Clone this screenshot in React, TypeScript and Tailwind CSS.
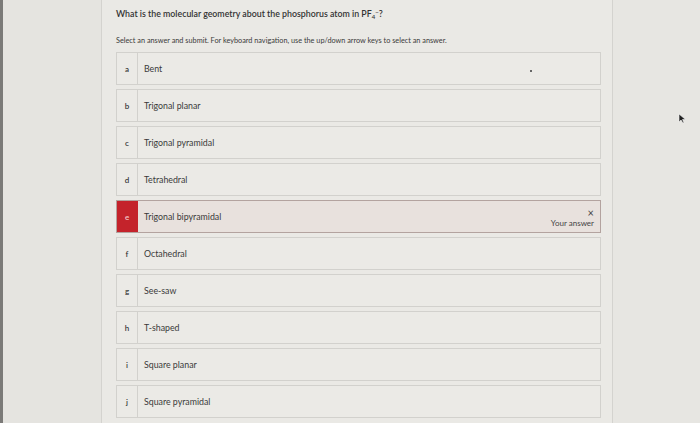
import React from 'react';

type Option = {
    key: string;
    label: string;
    wrong?: boolean;
};

const options: Option[] = [
    { key: 'a', label: 'Bent' },
    { key: 'b', label: 'Trigonal planar' },
    { key: 'c', label: 'Trigonal pyramidal' },
    { key: 'd', label: 'Tetrahedral' },
    { key: 'e', label: 'Trigonal bipyramidal', wrong: true },
    { key: 'f', label: 'Octahedral' },
    { key: 'g', label: 'See-saw' },
    { key: 'h', label: 'T-shaped' },
    { key: 'i', label: 'Square planar' },
    { key: 'j', label: 'Square pyramidal' },
];

function OptionRow({ option }: { option: Option }) {
    return (
        <div
            className={`flex h-[33px] items-stretch border ${
                option.wrong ? 'border-[#b3a39f] bg-[#e8e1dd]' : 'border-[#d2d1cd] bg-[#ebeae6]'
            }`}
        >
            <div
                className={`flex w-[21px] shrink-0 items-center justify-center border-r text-[8px] font-semibold ${
                    option.wrong ? 'border-[#c4232b] bg-[#c4232b] text-[#f3c9c9]' : 'border-[#d2d1cd] text-[#3a3a3a]'
                }`}
            >
                {option.key}
            </div>
            <div className="flex flex-1 items-center pl-[6px] text-[8.8px] text-[#3a3a3a]">{option.label}</div>
            {option.wrong && (
                <div className="flex flex-col items-end justify-center pr-[6px] leading-none text-[#444]">
                    <span className="text-[11px] leading-[11px]">×</span>
                    <span className="mt-[1px] text-[8px]">Your answer</span>
                </div>
            )}
        </div>
    );
}

export default function App() {
    return (
        <div
            className="relative flex h-[423px] w-[700px] overflow-hidden bg-[#e7e6e2]"
            style={{ fontFamily: 'Lato, "Open Sans", sans-serif' }}
        >
            <div className="w-[3px] shrink-0 bg-[#7b7a78]" />
            <div className="w-[98px] shrink-0 bg-[#e5e4e0]" />
            <div className="w-[512px] shrink-0 border-x border-[#d4d3cf] bg-[#eae9e5] pl-[14px] pr-[11px] pt-[7px]">
                <p className="text-[8.8px] font-semibold text-[#333]">
                    What is the molecular geometry about the phosphorus atom in PF
                    <sub className="text-[6px]">4</sub>
                    <sup className="text-[6px]">−</sup>?
                </p>
                <p className="mt-[16px] text-[7.3px] text-[#3a3a3a]">
                    Select an answer and submit. For keyboard navigation, use the up/down arrow keys to select an answer.
                </p>
                <div className="mt-[5px] flex flex-col gap-[4px]">
                    {options.map((o) => (
                        <OptionRow key={o.key} option={o} />
                    ))}
                </div>
            </div>
            <div className="flex-1 bg-[#e7e6e2]" />
            <div className="absolute left-[530px] top-[70px] h-[2px] w-[2px] bg-[#666]" />
            <svg className="absolute left-[678px] top-[113px]" width="9" height="11" viewBox="0 0 9 11">
                <path d="M1 1 L1 9 L3 7 L5 10 L6 9.5 L4.5 6.5 L7.5 6.5 Z" fill="#222" stroke="#f5f5f5" strokeWidth="0.6" />
            </svg>
        </div>
    );
}
